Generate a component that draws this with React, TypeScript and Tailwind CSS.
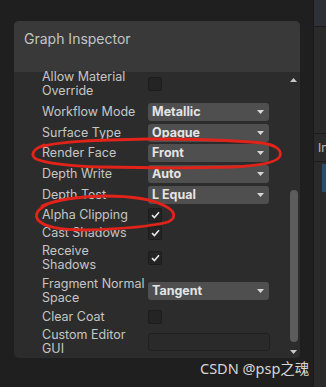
import React from "react";

type Row =
  | { kind: "check"; label: string[]; checked: boolean; h: number; mt: number }
  | { kind: "select"; label: string[]; value: string; h: number; mt: number }
  | { kind: "text"; label: string[]; h: number; mt: number };

const ROWS: Row[] = [
  { kind: "check", label: ["Allow Material", "Override"], checked: false, h: 28, mt: 0 },
  { kind: "select", label: ["Workflow Mode"], value: "Metallic", h: 20, mt: 4 },
  { kind: "select", label: ["Surface Type"], value: "Opaque", h: 20, mt: 1 },
  { kind: "select", label: ["Render Face"], value: "Front", h: 20, mt: 0 },
  { kind: "select", label: ["Depth Write"], value: "Auto", h: 20, mt: 1 },
  { kind: "select", label: ["Depth Test"], value: "L Equal", h: 20, mt: 1 },
  { kind: "check", label: ["Alpha Clipping"], checked: true, h: 19, mt: 0 },
  { kind: "check", label: ["Cast Shadows"], checked: true, h: 18, mt: 0 },
  { kind: "check", label: ["Receive", "Shadows"], checked: true, h: 28, mt: 2 },
  { kind: "select", label: ["Fragment Normal", "Space"], value: "Tangent", h: 28, mt: 5 },
  { kind: "check", label: ["Clear Coat"], checked: false, h: 18, mt: 3 },
  { kind: "text", label: ["Custom Editor", "GUI"], h: 28, mt: 2 },
];

function Caret({ up, className }: { up?: boolean; className?: string }) {
  return (
    <svg width="7" height="4" viewBox="0 0 7 4" className={className}>
      <path d={up ? "M0 4 L3.5 0 L7 4 Z" : "M0 0 L7 0 L3.5 4 Z"} fill="currentColor" />
    </svg>
  );
}

function Checkbox({ checked }: { checked: boolean }) {
  return (
    <span className="flex size-[14px] items-center justify-center rounded-[2px] border border-[#1c1c1c] bg-[#242424]">
      {checked ? (
        <svg width="9" height="8" viewBox="0 0 9 8">
          <path d="M1 4.2 L3.4 6.5 L8 1.2" fill="none" stroke="#e6e6e6" strokeWidth="1.6" />
        </svg>
      ) : null}
    </span>
  );
}

function Field({ row }: { row: Row }) {
  if (row.kind === "check") return <Checkbox checked={row.checked} />;
  if (row.kind === "text")
    return <span className="h-[18px] w-[122px] rounded-[3px] border border-[#202020] bg-[#2a2a2a]" />;
  return (
    <span className="flex h-[18px] w-[121px] items-center justify-between rounded-[3px] bg-[#4f4f4f] pl-[4px] pr-[5px]">
      <span className="text-[12.5px] font-bold text-[#e4e4e4]">{row.value}</span>
      <Caret className="text-[#d8d8d8]" />
    </span>
  );
}

export default function App() {
  return (
    <div className="relative flex h-[387px] w-[326px] overflow-hidden bg-[#1f1f1f] font-['Inter','Noto_Sans',sans-serif]">
      <div className="pl-[14px] pt-[21px]">
        <div className="flex h-[337px] w-[286px] flex-col overflow-hidden rounded-[5px] bg-[#2c2c2c]">
          <div className="h-[51px] shrink-0 bg-[#393939] pl-[10px] pt-[8px] text-[14px] leading-[20px] text-[#c4c4c4]">
            Graph Inspector
          </div>
          <div className="flex flex-1">
            <div className="-mt-[2px] flex w-[273px] flex-col pl-[28px]">
              {ROWS.map((row, i) => (
                <div
                  key={i}
                  className="flex items-center"
                  style={{ height: row.h, marginTop: row.mt }}
                >
                  <div className="w-[106px] text-[12.5px] leading-[14px] text-[#c6c6c6]">
                    {row.label.map((l) => (
                      <div key={l}>{l}</div>
                    ))}
                  </div>
                  <Field row={row} />
                </div>
              ))}
            </div>
            <div className="flex w-[13px] flex-col items-center pt-[6px]">
              <Caret up className="text-[#c8c8c8]" />
              <div className="mt-[108px] h-[152px] w-[8px] rounded-full bg-[#5c5c5c]" />
              <Caret className="mt-[8px] text-[#c8c8c8]" />
            </div>
          </div>
        </div>
      </div>

      <div className="ml-[13px] flex h-full w-[13px] flex-col border-l border-[#191919] bg-[#2a2a2a]">
        <div className="h-[27px] border-b border-[#1c1c1c] bg-[#2d3034]" />
        <div className="h-[107px] border-b border-[#1c1c1c]" />
        <div className="flex h-[28px] items-center border-b border-[#1c1c1c] pl-[4px] text-[12px] text-[#bdbdbd]">
          In
        </div>
        <div className="ml-[8px] mt-[2px] h-[28px] w-[4px] bg-[#2a4d6e]" />
      </div>

      <svg
        className="pointer-events-none absolute left-0 top-0"
        width="326"
        height="387"
        viewBox="0 0 326 387"
      >
        <path
          d="M40 147 C60 141 100 140 150 139 C200 139 240 141 262 143 C276 145 282 150 280 156 C277 163 255 166 233 167 C200 168 150 168 100 167 C70 166 48 164 36 159 C30 155 33 149 44 145"
          fill="none"
          stroke="#e2231a"
          strokeWidth="2.8"
          strokeLinecap="round"
        />
        <path
          d="M42 206 C55 200 80 196 105 196 C130 196 152 199 165 206 C175 211 177 218 168 222 C150 227 120 229 85 230 C62 230 44 227 38 220 C34 214 38 209 48 204"
          fill="none"
          stroke="#e2231a"
          strokeWidth="2.8"
          strokeLinecap="round"
        />
      </svg>

      <div className="absolute left-[200px] top-[359px] font-['Noto_Sans','Noto_Sans_CJK_SC',sans-serif] text-[14.5px] leading-[18px] text-[#d6d6d6]">
        CSDN @psp之魂
      </div>
    </div>
  );
}
